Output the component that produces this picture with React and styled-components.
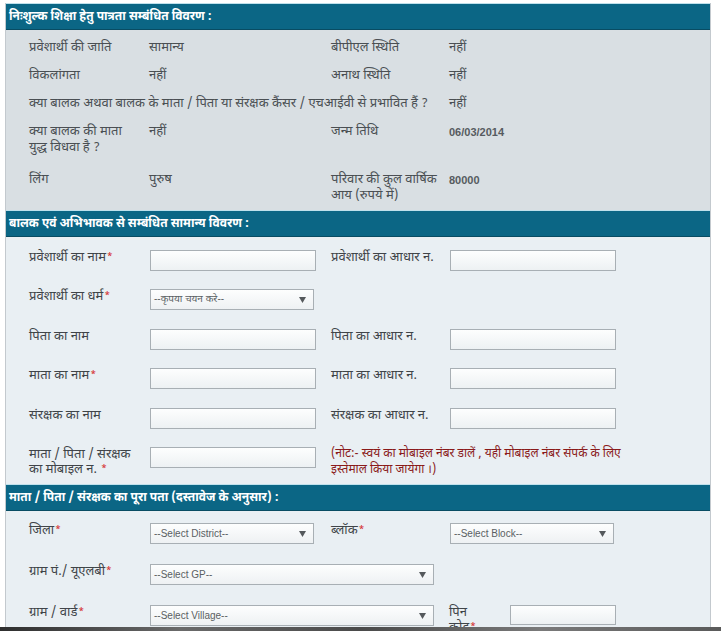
import React from "react";
import styled, { createGlobalStyle } from "styled-components";

const Global = createGlobalStyle`
  html, body { margin: 0; padding: 0; background: #ffffff; }
  body { font-family: "Noto Sans Devanagari", "Lohit Devanagari", "Liberation Sans", sans-serif; }
  * { box-sizing: border-box; }
`;

const Page = styled.div`
  padding: 3px 10px 0 5px;
`;

const Panel = styled.div`
  border-left: 1px solid #c3c9ce;
  border-right: 1px solid #c3c9ce;
`;

const Header = styled.div`
  height: 27px;
  background: #0b6685;
  border-top: 1px solid #bfe1ec;
  border-bottom: 1px solid #084c63;
  color: #ffffff;
  font-size: 12px;
  font-weight: 700;
  line-height: 26px;
  padding-left: 3px;
  white-space: nowrap;
`;

const InfoBody = styled.div`
  background: #d9dfe3;
  padding: 2px 0 2px 23px;
`;

const InfoRow = styled.div`
  display: grid;
  grid-template-columns: 120px 182px 118px 1fr;
  padding: 8px 0 4px;
  margin-bottom: ${(p) => p.$mb || 0}px;
  font-size: 13px;
  line-height: 16px;
  color: #4a4f53;
`;

const InfoCell = styled.div`
  grid-column: ${(p) => p.$span || "auto"};
  white-space: nowrap;
`;

const Num = styled.span`
  font-family: "Liberation Sans", Arial, sans-serif;
  font-size: 11px;
  font-weight: 700;
  color: #565b5f;
`;

const FormBody = styled.div`
  background: #e9eff3;
  padding: ${(p) => p.$pt}px 0 ${(p) => p.$pb}px 23px;
`;

const FormRow = styled.div`
  display: grid;
  grid-template-columns: ${(p) => p.$cols || "120px 182px 118px 1fr"};
  align-items: start;
  height: ${(p) => p.$h}px;
  padding-top: 7px;
`;

const Label = styled.div`
  font-size: 13px;
  line-height: 15px;
  padding-top: 2px;
  color: #3f4448;
  grid-column: ${(p) => p.$span || "auto"};
`;

const Star = styled.span`
  color: #d41c1c;
  font-size: 9px;
  vertical-align: top;
  margin-left: 1px;
`;

const Note = styled.div`
  grid-column: 3 / span 2;
  font-size: 12px;
  line-height: 16px;
  padding-top: 1px;
  color: #8a1a1a;
  white-space: nowrap;
`;

const TextInput = styled.div`
  width: ${(p) => p.$w || 166}px;
  height: ${(p) => p.$hh || 21}px;
  margin: 2px 0 0 1px;
  border: 1px solid #a8afb4;
  background: linear-gradient(#fdfefe, #edf1f3);
`;

const SelectBox = styled.div`
  grid-column: ${(p) => p.$span || "auto"};
  width: ${(p) => p.$w}px;
  height: 21px;
  margin: 2px 0 0 1px;
  border: 1px solid #a8afb4;
  background: linear-gradient(#fdfefe, #eef1f3);
  display: flex;
  align-items: center;
  justify-content: space-between;
  padding: 0 7px 0 3px;
  font-family: "Liberation Sans", "Noto Sans Devanagari", Arial, sans-serif;
  font-size: 10px;
  color: #5a5f63;
  white-space: nowrap;
`;

const Arrow = () => (
  <svg width="7" height="6" viewBox="0 0 7 6">
    <path d="M0 0 L7 0 L3.5 6 Z" fill="#55595c" />
  </svg>
);

const Select = ({ text, w, span }) => (
  <SelectBox $w={w} $span={span}>
    <span>{text}</span>
    <Arrow />
  </SelectBox>
);

const BottomBar = styled.div`
  position: fixed;
  left: 0;
  right: 0;
  bottom: 0;
  height: 4px;
  background: linear-gradient(90deg, #2e2e2e 0%, #6a6a6a 25%, #4a4a4a 50%, #7a7a7a 75%, #5a5a5a 100%);
`;

const Req = ({ children }) => (
  <>
    {children}
    <Star>*</Star>
  </>
);

export default function App() {
  return (
    <>
      <Global />
      <Page>
        <Panel>
          <Header>निःशुल्क शिक्षा हेतु पात्रता सम्बंधित विवरण :</Header>
          <InfoBody>
            <InfoRow>
              <InfoCell>प्रवेशार्थी की जाति</InfoCell>
              <InfoCell>सामान्य</InfoCell>
              <InfoCell>बीपीएल स्थिति</InfoCell>
              <InfoCell>नहीं</InfoCell>
            </InfoRow>
            <InfoRow>
              <InfoCell>विकलांगता</InfoCell>
              <InfoCell>नहीं</InfoCell>
              <InfoCell>अनाथ स्थिति</InfoCell>
              <InfoCell>नहीं</InfoCell>
            </InfoRow>
            <InfoRow>
              <InfoCell $span="1 / span 3">
                क्या बालक अथवा बालक के माता / पिता या संरक्षक कैंसर / एचआईवी से प्रभावित हैं ?
              </InfoCell>
              <InfoCell>नहीं</InfoCell>
            </InfoRow>
            <InfoRow $mb={4}>
              <InfoCell>
                क्या बालक की माता
                <br />
                युद्ध विधवा है ?
              </InfoCell>
              <InfoCell>नहीं</InfoCell>
              <InfoCell>जन्म तिथि</InfoCell>
              <InfoCell>
                <Num>06/03/2014</Num>
              </InfoCell>
            </InfoRow>
            <InfoRow>
              <InfoCell>लिंग</InfoCell>
              <InfoCell>पुरुष</InfoCell>
              <InfoCell>
                परिवार की कुल वार्षिक
                <br />
                आय (रुपये में)
              </InfoCell>
              <InfoCell>
                <Num>80000</Num>
              </InfoCell>
            </InfoRow>
          </InfoBody>

          <Header>बालक एवं अभिभावक से सम्बंधित सामान्य विवरण :</Header>
          <FormBody $pt={4} $pb={7}>
            <FormRow $h={39.4}>
              <Label>
                <Req>प्रवेशार्थी का नाम</Req>
              </Label>
              <TextInput />
              <Label>प्रवेशार्थी का आधार न.</Label>
              <TextInput />
            </FormRow>
            <FormRow $h={39.4}>
              <Label>
                <Req>प्रवेशार्थी का धर्म</Req>
              </Label>
              <Select text="--कृपया चयन करे--" w={164} />
            </FormRow>
            <FormRow $h={39.4}>
              <Label>पिता का नाम</Label>
              <TextInput />
              <Label>पिता का आधार न.</Label>
              <TextInput />
            </FormRow>
            <FormRow $h={39.4}>
              <Label>
                <Req>माता का नाम</Req>
              </Label>
              <TextInput />
              <Label>माता का आधार न.</Label>
              <TextInput />
            </FormRow>
            <FormRow $h={39.4}>
              <Label>संरक्षक का नाम</Label>
              <TextInput />
              <Label>संरक्षक का आधार न.</Label>
              <TextInput />
            </FormRow>
            <FormRow $h={39.4}>
              <Label>
                माता / पिता / संरक्षक
                <br />
                <Req>का मोबाइल न. </Req>
              </Label>
              <TextInput />
              <Note>
                (नोट:- स्वयं का मोबाइल नंबर डालें , यही मोबाइल नंबर संपर्क के लिए
                <br />
                इस्तेमाल किया जायेगा ।)
              </Note>
            </FormRow>
          </FormBody>

          <Header>माता / पिता / संरक्षक का पूरा पता (दस्तावेज के अनुसार) :</Header>
          <FormBody $pt={3} $pb={10}>
            <FormRow $h={41}>
              <Label>
                <Req>जिला</Req>
              </Label>
              <Select text="--Select District--" w={164} />
              <Label>
                <Req>ब्लॉक</Req>
              </Label>
              <Select text="--Select Block--" w={164} />
            </FormRow>
            <FormRow $h={41} $cols="120px 300px 60px 1fr">
              <Label>
                <Req>ग्राम पं./ यूएलबी</Req>
              </Label>
              <Select text="--Select GP--" w={284} />
            </FormRow>
            <FormRow $h={41} $cols="120px 300px 60px 1fr">
              <Label>
                <Req>ग्राम / वार्ड</Req>
              </Label>
              <Select text="--Select Village--" w={284} />
              <Label>
                पिन
                <br />
                <Req>कोड</Req>
              </Label>
              <TextInput $w={106} $hh={20} />
            </FormRow>
          </FormBody>
        </Panel>
      </Page>
      <BottomBar />
    </>
  );
}
